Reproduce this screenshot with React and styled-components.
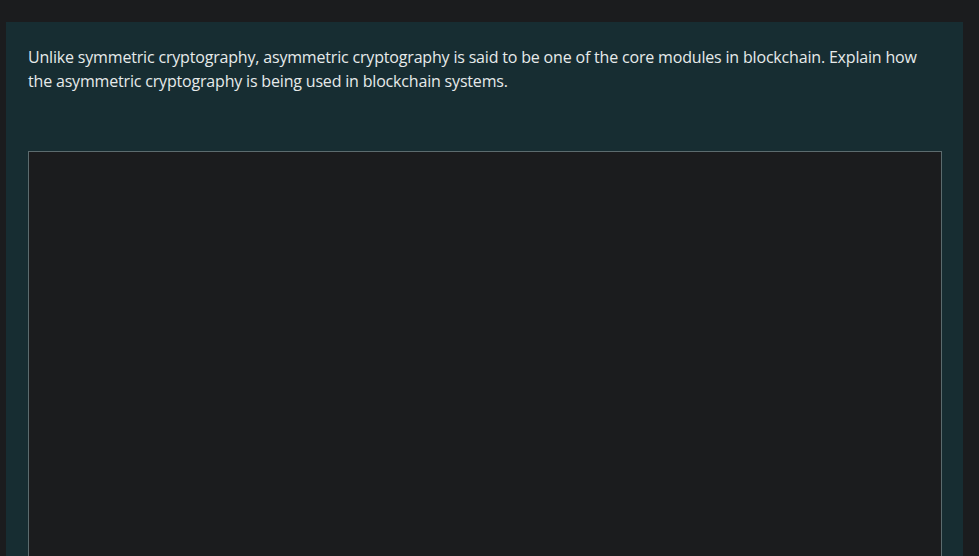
import React from "react";
import styled, { createGlobalStyle } from "styled-components";

const GlobalStyle = createGlobalStyle`
  html, body {
    margin: 0;
    padding: 0;
    background: #1b1c1e;
    height: 100%;
    overflow: hidden;
  }
`;

const Page = styled.div`
  padding: 22px 16px 0 6px;
  height: 556px;
  box-sizing: border-box;
`;

const Panel = styled.section`
  background: #172d32;
  height: 100%;
  padding: 23px 21px 0 22px;
  box-sizing: border-box;
  display: flex;
  flex-direction: column;
`;

const Question = styled.p`
  margin: 0;
  color: #e6eaea;
  font-family: "Open Sans", "Noto Sans", sans-serif;
  font-size: 16px;
  line-height: 24px;
  letter-spacing: -0.18px;
  max-width: 900px;
`;

const Answer = styled.textarea`
  margin-top: 58px;
  flex: 1;
  background: #1b1c1e;
  border: 1px solid #5c6b6e;
  border-bottom: none;
  color: #e4e8e8;
  resize: none;
  outline: none;
  font-family: "Open Sans", sans-serif;
  font-size: 16px;
`;

export default function App() {
  return (
    <>
      <GlobalStyle />
      <Page>
        <Panel>
          <Question>
            Unlike symmetric cryptography, asymmetric cryptography is said to be one of the core
            modules in blockchain. Explain how the asymmetric cryptography is being used in
            blockchain systems.
          </Question>
          <Answer aria-label="Answer" />
        </Panel>
      </Page>
    </>
  );
}
